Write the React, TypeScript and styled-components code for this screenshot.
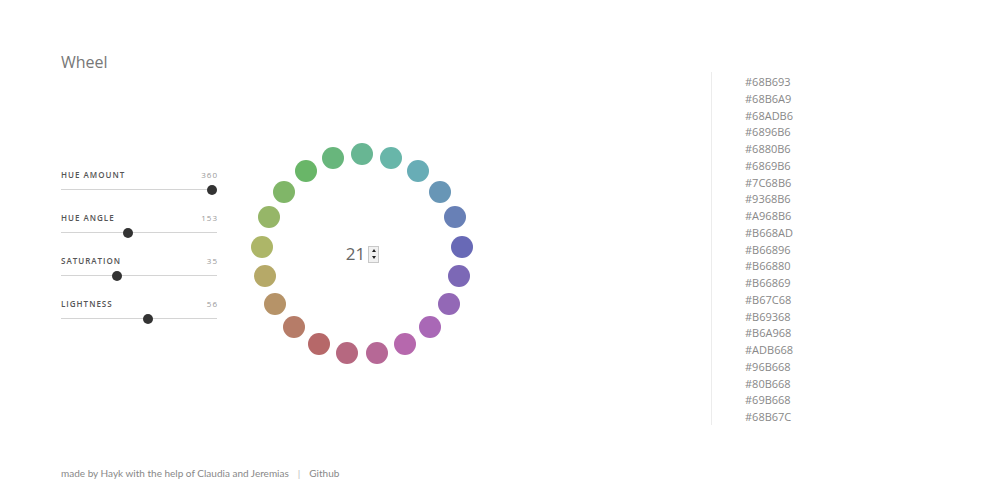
import styled, { createGlobalStyle } from "styled-components";

const GlobalStyle = createGlobalStyle`
  html, body {
    margin: 0;
    padding: 0;
    background: #ffffff;
  }
  body {
    font-family: "Open Sans", "Noto Sans", "DejaVu Sans", sans-serif;
  }
`;

const COUNT = 21;
const HUE_AMOUNT = 360;
const HUE_ANGLE = 153;
const SATURATION = 35;
const LIGHTNESS = 56;
const RADIUS = 100;
const DOT = 22;

function hslToHex(h: number, s: number, l: number) {
  const sat = s / 100;
  const lig = l / 100;
  const c = (1 - Math.abs(2 * lig - 1)) * sat;
  const hp = h / 60;
  const x = c * (1 - Math.abs((hp % 2) - 1));
  let r = 0,
    g = 0,
    b = 0;
  if (hp < 1) [r, g, b] = [c, x, 0];
  else if (hp < 2) [r, g, b] = [x, c, 0];
  else if (hp < 3) [r, g, b] = [0, c, x];
  else if (hp < 4) [r, g, b] = [0, x, c];
  else if (hp < 5) [r, g, b] = [x, 0, c];
  else [r, g, b] = [c, 0, x];
  const m = lig - c / 2;
  const toHex = (v: number) =>
    Math.round((v + m) * 255)
      .toString(16)
      .padStart(2, "0")
      .toUpperCase();
  return `#${toHex(r)}${toHex(g)}${toHex(b)}`;
}

const colors = Array.from({ length: COUNT }, (_, i) =>
  hslToHex((HUE_ANGLE + (i * HUE_AMOUNT) / COUNT) % 360, SATURATION, LIGHTNESS)
);

const sliders = [
  { label: "HUE AMOUNT", value: HUE_AMOUNT, max: 360 },
  { label: "HUE ANGLE", value: HUE_ANGLE, max: 360 },
  { label: "SATURATION", value: SATURATION, max: 100 },
  { label: "LIGHTNESS", value: LIGHTNESS, max: 100 },
];

const Page = styled.div`
  width: 1000px;
  height: 500px;
  box-sizing: border-box;
  padding: 52px 0 0 61px;
  display: flex;
  flex-direction: column;
`;

const Title = styled.h1`
  margin: 0;
  font-size: 16px;
  line-height: 20px;
  font-weight: 400;
  color: #777;
`;

const Content = styled.div`
  display: flex;
  height: 353px;
`;

const Controls = styled.div`
  width: 156px;
  align-self: center;
  display: flex;
  flex-direction: column;
  gap: 17px;
  margin-top: -5px;
`;

const SliderGroup = styled.div`
  display: flex;
  flex-direction: column;
  gap: 4px;
`;

const SliderHead = styled.div`
  display: flex;
  justify-content: space-between;
  font-size: 8px;
  line-height: 12px;
  letter-spacing: 1px;
`;

const SliderLabel = styled.span`
  font-weight: 600;
  color: #555;
`;

const SliderValue = styled.span`
  color: #999;
  margin-right: -1px;
`;

const Track = styled.div`
  position: relative;
  height: 10px;
  &::before {
    content: "";
    position: absolute;
    left: 0;
    right: 0;
    top: 4.5px;
    height: 1px;
    background: #d4d4d4;
  }
`;

const Thumb = styled.div`
  position: absolute;
  top: 0;
  width: 10px;
  height: 10px;
  border-radius: 50%;
  background: #333;
`;

const Wheel = styled.div`
  position: relative;
  width: ${RADIUS * 2 + DOT}px;
  height: ${RADIUS * 2 + DOT}px;
  margin: 71px 0 0 34px;
  display: flex;
  align-items: center;
  justify-content: center;
`;

const Dot = styled.div<{ $color: string }>`
  position: absolute;
  width: ${DOT}px;
  height: ${DOT}px;
  border-radius: 50%;
  background: ${({ $color }) => $color};
`;

const Counter = styled.div`
  display: flex;
  align-items: center;
  gap: 3px;
  margin-left: 1px;
`;

const CountValue = styled.span`
  font-size: 17px;
  line-height: 20px;
  color: #666;
`;

const Spinner = styled.div`
  width: 9px;
  height: 15px;
  border: 1px solid #c8c8c8;
  background: #f1f1f1;
  display: flex;
  flex-direction: column;
`;

const SpinHalf = styled.div<{ $down?: boolean }>`
  flex: 1;
  display: flex;
  align-items: center;
  justify-content: center;
  &::after {
    content: "";
    border-left: 2px solid transparent;
    border-right: 2px solid transparent;
    ${({ $down }) =>
      $down ? "border-top: 3px solid #222;" : "border-bottom: 3px solid #222;"}
  }
`;

const ColorList = styled.ul`
  list-style: none;
  margin: 0 0 0 238px;
  padding: 2px 0 0 33px;
  border-left: 1px solid #ececec;
  font-size: 11px;
  line-height: 16.75px;
  color: #888;
`;

const Footer = styled.footer`
  margin-top: 41px;
  font-family: Lato, "Open Sans", sans-serif;
  font-size: 10px;
  line-height: 14px;
  color: #888;
`;

const Separator = styled.span`
  margin: 0 9px;
  color: #bbb;
`;

export default function App() {
  const center = RADIUS + DOT / 2;
  return (
    <>
      <GlobalStyle />
      <Page>
        <Title>Wheel</Title>
        <Content>
          <Controls>
            {sliders.map((s) => (
              <SliderGroup key={s.label}>
                <SliderHead>
                  <SliderLabel>{s.label}</SliderLabel>
                  <SliderValue>{s.value}</SliderValue>
                </SliderHead>
                <Track>
                  <Thumb style={{ left: `${(s.value / s.max) * 146}px` }} />
                </Track>
              </SliderGroup>
            ))}
          </Controls>
          <Wheel>
            {colors.map((c, i) => {
              const a = (i * 2 * Math.PI) / COUNT;
              return (
                <Dot
                  key={i}
                  $color={c}
                  style={{
                    left: center + RADIUS * Math.sin(a) - DOT / 2,
                    top: center - RADIUS * Math.cos(a) - DOT / 2,
                  }}
                />
              );
            })}
            <Counter>
              <CountValue>{COUNT}</CountValue>
              <Spinner>
                <SpinHalf />
                <SpinHalf $down />
              </Spinner>
            </Counter>
          </Wheel>
          <ColorList>
            {colors.map((c) => (
              <li key={c}>{c}</li>
            ))}
          </ColorList>
        </Content>
        <Footer>
          made by Hayk with the help of Claudia and Jeremias
          <Separator>|</Separator>
          Github
        </Footer>
      </Page>
    </>
  );
}
